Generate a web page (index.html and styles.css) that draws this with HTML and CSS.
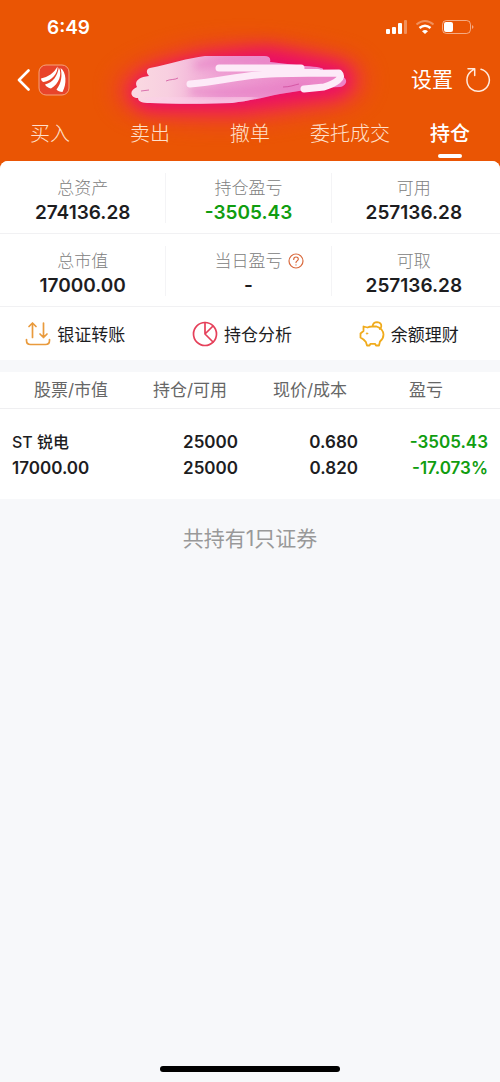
FILE: index.html
```html
<!DOCTYPE html>
<html lang="zh-CN">
<head>
<meta charset="utf-8">
<meta name="viewport" content="width=device-width, initial-scale=1">
<title>持仓</title>
<link rel="stylesheet" href="styles.css">
</head>
<body>
<div class="app">
  <header class="top">
    <svg class="scribble" viewBox="0 0 500 161" aria-hidden="true">
      <defs>
        <filter id="wide" x="-40%" y="-100%" width="180%" height="300%" color-interpolation-filters="sRGB"><feGaussianBlur stdDeviation="13"/></filter>
        <filter id="near" x="-40%" y="-100%" width="180%" height="300%" color-interpolation-filters="sRGB"><feGaussianBlur stdDeviation="9"/></filter>
        <filter id="soft" x="-10%" y="-60%" width="120%" height="220%" color-interpolation-filters="sRGB"><feGaussianBlur stdDeviation="4"/></filter>
        <linearGradient id="paint" x1="0" x2="1" y1="0" y2="0">
          <stop offset="0" stop-color="#fbdde2"/>
          <stop offset=".2" stop-color="#f8cfe0"/>
          <stop offset=".42" stop-color="#efa0d4"/>
          <stop offset=".7" stop-color="#ec8dcb"/>
          <stop offset="1" stop-color="#ee7fc6"/>
        </linearGradient>
        <clipPath id="shape"><path d="M150 68C146 69 146 73 149 76C138 77 134 82 137 87C128 91 131 98 138 98C138 102 143 103 150 103C175 104 205 104 232 103C250 101 265 97 280 94L318 88L340 87C347 86 348 79 343 77L342 72L323 70C324 68 320 67 305 66L270 62C271 58 269 56 264 56L205 56C188 58 170 64 150 68Z"/></clipPath>
      </defs>
      <path d="M145 80C190 55 270 53 345 74C360 82 345 94 305 96C250 110 180 108 140 98C125 92 130 85 145 80Z" fill="#f3304a" stroke="#f3304a" stroke-width="26" stroke-linejoin="round" opacity=".85" filter="url(#wide)"/>
      <path d="M150 78L205 62L268 54L340 70C350 78 345 87 335 90L240 103H145L137 92Z" fill="#ea0c68" stroke="#ea0c68" stroke-width="12" stroke-linejoin="round" filter="url(#near)"/>
      <g clip-path="url(#shape)">
        <path d="M120 50H360V110H120Z" fill="url(#paint)"/>
        <path d="M195 66C220 60 250 60 275 62M190 91C230 96 280 88 310 86" fill="none" stroke="#e478c2" stroke-width="8" opacity=".6" filter="url(#soft)"/>
        <path d="M145 102C185 101 215 104 255 99" fill="none" stroke="#fbd0e8" stroke-width="8" filter="url(#soft)"/>
        <path d="M166 81C170 79 175 80 178 78M141 91L149 90M283 87C290 87 294 85 299 84" fill="none" stroke="#cc4596" stroke-width="1" opacity=".7"/>
      </g>
      <g fill="none" stroke="#fdeaf8" stroke-linecap="round" stroke-linejoin="round">
        <path d="M219 68H301" stroke-width="7"/>
        <path d="M190 84C220 82 240 75 270 74C295 73 320 73 339 73C344 78 336 83 324 87L304 89" stroke-width="7"/>
        <path d="M268 72L318 72" stroke-width="6"/>
      </g>
    </svg>
    <div class="status">
      <span class="time">6:49</span>
      <svg class="indicators" viewBox="0 0 90 16" width="90" height="16" aria-hidden="true">
        <g fill="#fff">
          <rect x="1" y="10" width="4" height="5" rx="1"/><rect x="7" y="8" width="4" height="7" rx="1"/><rect x="13" y="4" width="4" height="11" rx="1"/><rect x="19" y="1" width="3" height="14" rx="1" opacity=".35"/>
          <path d="M40 15L37 12.300Q40 9.500 43 12.300Z"/>
        </g>
        <path d="M34.500 9Q40 4.500 45.500 9" fill="none" stroke="#fff" stroke-width="2.600"/>
        <path d="M31.500 5.500Q40-1.500 48.500 5.500" fill="none" stroke="#fff" stroke-width="2" opacity=".35"/>
        <rect x="57.500" y="1.500" width="28" height="13" rx="4" fill="none" stroke="#fff" opacity=".5"/>
        <rect x="59" y="3" width="9" height="10" rx="2" fill="#fff"/>
        <path d="M87 6Q90 8 87 10Z" fill="#fff" opacity=".5"/>
      </svg>
    </div>
    <div class="nav">
      <button class="icon-btn" type="button" aria-label="返回">
        <svg viewBox="0 0 14 24" width="14" height="24"><path d="M12.500 2.500L3 12L12.500 21.500" fill="none" stroke="#fff" stroke-width="2.600" stroke-linecap="round" stroke-linejoin="round"/></svg>
      </button>
      <button class="icon-btn" type="button" aria-label="首页">
        <svg viewBox="0 0 32 32" width="32" height="32">
          <rect x="1" y="1" width="30" height="30" rx="7" fill="#e8442b" stroke="#f6a27b"/>
          <g fill="#fff"><path d="M3 14.500C10 13 16 9 19.500 2.500C20 9 14 17 5.500 18C4 17.500 3 16 3 14.500Z"/><path d="M7 20.500C15 18.500 19.500 12 20.800 3.500C24.500 10 21 20 13 24.500C10.500 24 8 22.500 7 20.500Z"/><path d="M18.500 25.500C23.500 19 24.500 11 22.500 4C28.500 8 29 20 24.500 28C22 28 19.500 27 18.500 25.500Z"/></g>
        </svg>
      </button>
      <button class="settings" type="button">设置</button>
      <button class="icon-btn" type="button" aria-label="刷新">
        <svg viewBox="0 0 26 26" width="26" height="26" fill="none" stroke="#ffeade" stroke-width="1.500" stroke-linecap="round" stroke-linejoin="round"><path d="M16 2.200A11.200 11.200 0 1 1 6 4.400L9.500 2M3 1.800H9.700V8.500"/></svg>
      </button>
    </div>
    <nav class="tabs">
      <a href="#buy">买入</a>
      <a href="#sell">卖出</a>
      <a href="#cancel">撤单</a>
      <a href="#orders">委托成交</a>
      <a class="active" href="#positions" aria-current="page">持仓</a>
    </nav>
  </header>
  <main>
    <section class="summary">
      <dl class="stats">
        <div class="stat"><dt>总资产</dt><dd>274136.28</dd></div>
        <div class="stat"><dt>持仓盈亏</dt><dd class="down">-3505.43</dd></div>
        <div class="stat"><dt>可用</dt><dd>257136.28</dd></div>
      </dl>
      <dl class="stats">
        <div class="stat"><dt>总市值</dt><dd>17000.00</dd></div>
        <div class="stat"><dt>当日盈亏<button class="help" type="button" aria-label="说明"><svg viewBox="0 0 16 16" width="16" height="16" fill="none" stroke="#d9693c" stroke-width="1.200" stroke-linecap="round"><circle cx="8" cy="8" r="7"/><path d="M5.700 6.400C5.700 3.200 10.400 3.300 10.300 6.200C10.200 7.800 8 8 8 9.600M8 11.900V12"/></svg></button></dt><dd>-</dd></div>
        <div class="stat"><dt>可取</dt><dd>257136.28</dd></div>
      </dl>
      <div class="actions">
        <button class="action" type="button">
          <svg viewBox="0 0 26 26" width="26" height="26" fill="none" stroke="#e99a3c" stroke-width="1.700" stroke-linecap="round" stroke-linejoin="round"><path d="M7.500 16.500V2M4 5.500L7.500 2L11 5.500M18.500 2V16.500M15 13L18.500 16.500L22 13M1.500 18.500V19.500Q1.500 23.500 5.500 23.500H20.500Q24.500 23.500 24.500 19.500V18.500"/></svg>
          银证转账</button>
        <button class="action" type="button">
          <svg viewBox="0 0 26 26" width="26" height="26" fill="none" stroke="#e5405a" stroke-width="1.700" stroke-linecap="round" stroke-linejoin="round"><circle cx="13" cy="13" r="11.500"/><path d="M13 1.500V13L21 21M13 13L20.500 5.500"/></svg>
          持仓分析</button>
        <button class="action" type="button">
          <svg viewBox="0 0 26 26" width="26" height="26" fill="none" stroke="#f0ab1c" stroke-width="1.800" stroke-linecap="round" stroke-linejoin="round"><path d="M4.500 5.500L8.500 6.500Q10.500 5.500 13 5.500H17.500Q24 7.500 24.500 13.500Q24.500 17.500 21 20.500L20 24.500H17L16 22.800H11.500L10.500 24.500H8L6.800 20.800L4.500 18.500L1.500 16.500V12.500L4.500 10ZM13.500 5Q14.500 1.200 18 1.200Q22.500 1.500 22.300 5.200Q22.200 7 20.800 8"/><circle cx="8" cy="12.500" r=".8" fill="#f0ab1c" stroke-width=".6"/></svg>
          余额理财</button>
      </div>
    </section>
    <section class="holdings">
      <table>
        <thead><tr><th scope="col">股票/市值</th><th scope="col">持仓/可用</th><th scope="col">现价/成本</th><th scope="col">盈亏</th></tr></thead>
        <tbody>
          <tr><td class="name">ST 锐电</td><td>25000</td><td>0.680</td><td class="down">-3505.43</td></tr>
          <tr><td>17000.00</td><td>25000</td><td>0.820</td><td class="down">-17.073%</td></tr>
        </tbody>
      </table>
    </section>
    <p class="total">共持有1只证券</p>
  </main>
  <div class="home-bar"></div>
</div>
</body>
</html>
```
FILE: styles.css
```css
* { box-sizing: border-box; }

body {
  margin: 0;
  background: #f7f8fa;
  color: #1d1d1f;
  font-family: Inter, "Noto Sans CJK SC", sans-serif;
  font-size: 17px;
}

button {
  margin: 0;
  padding: 0;
  border: 0;
  background: none;
  color: inherit;
  font: inherit;
}

svg { display: block; flex: none; }

.app {
  display: flex;
  flex-direction: column;
  min-height: 100vh;
  background: linear-gradient(#ea5504 180px, #f7f8fa 180px);
}

.top { position: relative; color: #fff; background: #ea5504; }

.scribble {
  position: absolute;
  top: 0;
  left: 50%;
  width: 500px;
  margin-left: -250px;
}

.status {
  position: relative;
  display: flex;
  align-items: center;
  justify-content: space-between;
  height: 54px;
  padding: 0 25px 0 47px;
}

.time { font-size: 19px; font-weight: 600; }

.nav {
  position: relative;
  display: flex;
  align-items: center;
  height: 51px;
  padding: 0 9px 0 16px;
}

.nav .icon-btn + .icon-btn { margin-left: 8px; }

.settings { margin: 0 12px 0 auto; font-size: 21px; line-height: 32px; }

.tabs {
  position: relative;
  display: grid;
  grid-template-columns: repeat(5, 1fr);
}

.tabs a {
  position: relative;
  height: 56px;
  color: #ffe0cc;
  font-size: 20px;
  font-weight: 300;
  line-height: 58px;
  text-align: center;
  text-decoration: none;
}

.tabs .active { color: #fff; font-weight: 500; }

.tabs .active::after {
  content: "";
  position: absolute;
  bottom: 3px;
  left: 50%;
  width: 24px;
  height: 4px;
  margin-left: -12px;
  border-radius: 2px;
  background: #fff;
}

main { flex: 1; background: #f7f8fa; border-radius: 8px 8px 0 0; }

.summary { background: #fff; border-radius: 8px 8px 0 0; }

.stats {
  display: grid;
  grid-template-columns: repeat(3, 1fr);
  margin: 0;
  padding: 12px 4px 10px 0;
  border-bottom: 1px solid #f1f1f3;
}

.stat { height: 50px; padding-top: 3px; text-align: center; }

.stat + .stat { border-left: 1px solid #f4f4f6; }

.stat dt {
  display: flex;
  align-items: center;
  justify-content: center;
  position: relative;
  color: #808080;
  font-weight: 300;
  line-height: 24px;
}

.stat dd {
  margin: 0;
  font-size: 19px;
  font-weight: 600;
  line-height: 25px;
}

.stat .help { position: absolute; left: 50%; margin-left: 40px; }

.down, .stat .down { color: #109d10; }

.actions {
  display: grid;
  grid-template-columns: repeat(3, 1fr);
  height: 53px;
}

.action {
  display: flex;
  align-items: center;
  justify-content: center;
  gap: 6px;
  padding-right: 16px;
}

.holdings { margin-top: 12px; padding-bottom: 18px; background: #fff; }

table { width: 100%; border-collapse: collapse; table-layout: fixed; }

th {
  height: 36px;
  padding: 0;
  border-bottom: 1px solid #efeff1;
  color: #666;
  font-weight: 400;
  line-height: 24px;
}

th:first-child { padding-left: 12px; width: 26%; }
th:nth-child(2), th:nth-child(3) { width: 24%; }
th:last-child { padding-right: 18px; }

td {
  height: 26px;
  padding: 0 12px;
  font-weight: 600;
  line-height: 26px;
  text-align: right;
}

td:first-child { text-align: left; }

td.name { font-weight: 500; font-size: 16px; }

tbody tr:first-child td { height: 46px; padding-top: 20px; }

.total {
  margin: 24px 0 0;
  color: #999;
  font-size: 21px;
  line-height: 32px;
  text-align: center;
}

.home-bar {
  align-self: center;
  width: 36%;
  height: 6px;
  margin-bottom: 10px;
  border-radius: 3px;
  background: #000;
}
```
